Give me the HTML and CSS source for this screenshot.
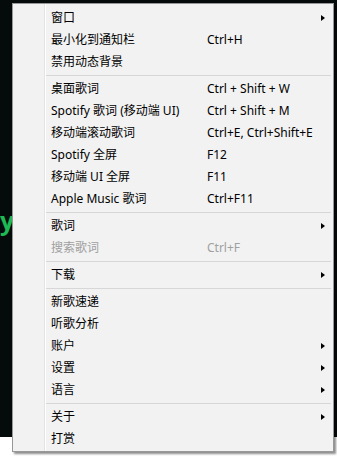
FILE: index.html
```html
<!DOCTYPE html>
<html lang="zh-CN">
<head>
<meta charset="utf-8">
<link rel="stylesheet" href="styles.css">
</head>
<body>
<div class="app">
  <div class="bg-title">y</div>
</div>
<div class="menu">
  <div class="row"><span class="label">窗口</span><span class="key"></span><span class="arrow"></span></div>
  <div class="row"><span class="label">最小化到通知栏</span><span class="key">Ctrl+H</span><span></span></div>
  <div class="row"><span class="label">禁用动态背景</span><span class="key"></span><span></span></div>
  <div class="sep"></div>
  <div class="row"><span class="label">桌面歌词</span><span class="key">Ctrl + Shift + W</span><span></span></div>
  <div class="row"><span class="label">Spotify 歌词 (移动端 UI)</span><span class="key">Ctrl + Shift + M</span><span></span></div>
  <div class="row"><span class="label">移动端滚动歌词</span><span class="key">Ctrl+E, Ctrl+Shift+E</span><span></span></div>
  <div class="row"><span class="label">Spotify 全屏</span><span class="key">F12</span><span></span></div>
  <div class="row"><span class="label">移动端 UI 全屏</span><span class="key">F11</span><span></span></div>
  <div class="row"><span class="label">Apple Music 歌词</span><span class="key">Ctrl+F11</span><span></span></div>
  <div class="sep"></div>
  <div class="row"><span class="label">歌词</span><span class="key"></span><span class="arrow"></span></div>
  <div class="row disabled"><span class="label">搜索歌词</span><span class="key">Ctrl+F</span><span></span></div>
  <div class="sep"></div>
  <div class="row"><span class="label">下载</span><span class="key"></span><span class="arrow"></span></div>
  <div class="sep"></div>
  <div class="row"><span class="label">新歌速递</span><span class="key"></span><span></span></div>
  <div class="row"><span class="label">听歌分析</span><span class="key"></span><span></span></div>
  <div class="row"><span class="label">账户</span><span class="key"></span><span class="arrow"></span></div>
  <div class="row"><span class="label">设置</span><span class="key"></span><span class="arrow"></span></div>
  <div class="row"><span class="label">语言</span><span class="key"></span><span class="arrow"></span></div>
  <div class="sep"></div>
  <div class="row"><span class="label">关于</span><span class="key"></span><span class="arrow"></span></div>
  <div class="row"><span class="label">打赏</span><span class="key"></span><span></span></div>
</div>
</body>
</html>
```
FILE: styles.css
```css
html, body {
  margin: 0;
  padding: 0;
  background: #ffffff;
}
body {
  position: relative;
  height: 456px;
  overflow: hidden;
}
.app {
  height: 437px;
  background: #050b0b;
}
.bg-title {
  padding-top: 205px;
  padding-left: 0;
  font-family: "Open Sans", "Noto Sans", sans-serif;
  font-weight: 700;
  font-size: 25px;
  line-height: 30px;
  color: #1db954;
}
.menu {
  position: absolute;
  left: 12px;
  top: 3px;
  width: 320px;
  padding: 3px 0 1px 0;
  border: 1px solid #979797;
  box-shadow: 2px 2px 2px rgba(0, 0, 0, 0.45);
  background:
    linear-gradient(to right, transparent 31px, #e2e3e3 31px, #e2e3e3 32px, #ffffff 32px, #ffffff 33px, transparent 33px),
    #f2f2f2;
  font-family: "Segoe UI", "Noto Sans", "Noto Sans CJK SC", sans-serif;
  font-size: 12px;
  color: #000000;
}
.row {
  display: grid;
  grid-template-columns: 156px 1fr 12px;
  align-items: center;
  height: 22px;
  padding-left: 38px;
  white-space: nowrap;
}
.label, .key {
  line-height: 22px;
}
.disabled {
  color: #a0a0a0;
}
.arrow {
  width: 0;
  height: 0;
  border-top: 3.5px solid transparent;
  border-bottom: 3.5px solid transparent;
  border-left: 4px solid #000000;
}
.sep {
  height: 5px;
  margin: 0 2px 0 33px;
  background: linear-gradient(to bottom, transparent 2px, #d7d7d7 2px, #d7d7d7 3px, transparent 3px);
}
```
